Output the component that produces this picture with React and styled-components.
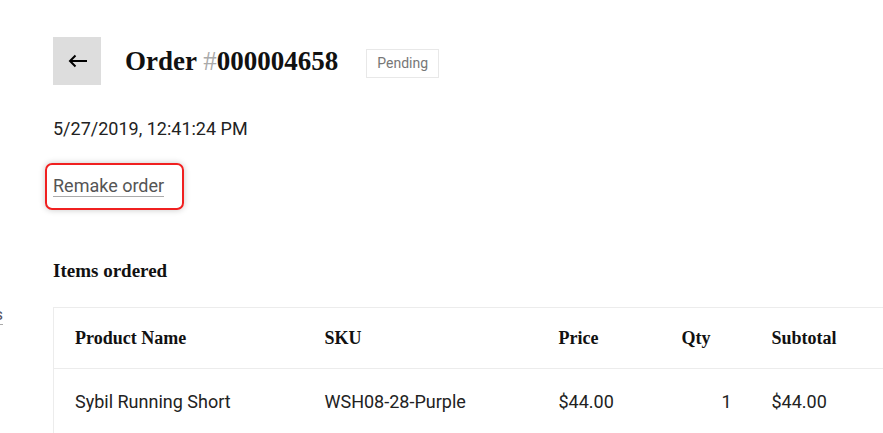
import styled, { createGlobalStyle } from "styled-components";

const GlobalStyle = createGlobalStyle`
  html, body {
    margin: 0;
    padding: 0;
    background: #fff;
    overflow: hidden;
  }
  body {
    font-family: Roboto, "Liberation Sans", sans-serif;
    color: #222;
  }
`;

const items = [
  { name: "Sybil Running Short", sku: "WSH08-28-Purple", price: "$44.00", qty: 1, subtotal: "$44.00" },
];

const BackArrow = () => (
  <svg width="20" height="14" viewBox="0 0 20 14" fill="none">
    <path d="M19 7H2M7.5 1.5L2 7l5.5 5.5" stroke="#000" strokeWidth="2" />
  </svg>
);

const App = () => {
  return (
    <>
      <GlobalStyle />
      <StyledLayout>
        <StyledSidebar>
          <SideLink href="#">My Orders</SideLink>
        </StyledSidebar>
        <StyledMain>
          <StyledHeader>
            <BackButton aria-label="Back">
              <BackArrow />
            </BackButton>
            <Title>
              Order <span>#</span>000004658
            </Title>
            <StatusBadge>Pending</StatusBadge>
          </StyledHeader>
          <OrderDate>5/27/2019, 12:41:24 PM</OrderDate>
          <Highlight>
            <RemakeLink href="#">Remake order</RemakeLink>
          </Highlight>
          <SectionTitle>Items ordered</SectionTitle>
          <ItemsTable>
            <colgroup>
              <col style={{ width: 250 }} />
              <col style={{ width: 234 }} />
              <col style={{ width: 123 }} />
              <col style={{ width: 90 }} />
              <col />
            </colgroup>
            <thead>
              <tr>
                <HeadCell>Product Name</HeadCell>
                <HeadCell>SKU</HeadCell>
                <HeadCell>Price</HeadCell>
                <HeadCell>Qty</HeadCell>
                <HeadCell>Subtotal</HeadCell>
              </tr>
            </thead>
            <tbody>
              {items.map((item) => (
                <tr key={item.sku}>
                  <Cell>{item.name}</Cell>
                  <Cell>{item.sku}</Cell>
                  <Cell>{item.price}</Cell>
                  <Cell $right>{item.qty}</Cell>
                  <Cell>{item.subtotal}</Cell>
                </tr>
              ))}
            </tbody>
          </ItemsTable>
        </StyledMain>
      </StyledLayout>
    </>
  );
};

export default App;

const StyledLayout = styled.div`
  display: flex;
  gap: 50px;
  width: 1000px;
`;

const StyledSidebar = styled.aside`
  width: 3px;
  flex-shrink: 0;
  overflow: hidden;
  display: flex;
  justify-content: flex-end;
  align-items: flex-start;
  padding-top: 304px;
`;

const SideLink = styled.a`
  white-space: nowrap;
  font-size: 17px;
  line-height: 20px;
  color: #556;
  text-decoration: none;
  border-bottom: 1px solid #aaa;
`;

const StyledMain = styled.main`
  padding-top: 37px;
  width: 870px;
`;

const StyledHeader = styled.div`
  display: flex;
  align-items: center;
  height: 48px;
`;

const BackButton = styled.button`
  width: 48px;
  height: 48px;
  border: none;
  background-color: #ddd;
  display: flex;
  align-items: center;
  justify-content: center;
  padding: 0 0 0 2px;
  margin-right: 24px;
`;

const Title = styled.h1`
  margin: 0 28px 0 0;
  font-family: "Liberation Serif", "DejaVu Serif", serif;
  font-size: 27px;
  font-weight: bold;
  color: #111;
  span {
    color: #aaa;
    font-weight: normal;
  }
`;

const StatusBadge = styled.span`
  display: inline-block;
  margin-top: 4px;
  border: 1px solid #e8e8e8;
  padding: 5px 10px;
  font-size: 14px;
  line-height: 17px;
  color: #777;
`;

const OrderDate = styled.div`
  margin-top: 34px;
  font-size: 18px;
  line-height: 20px;
  color: #222;
`;

const Highlight = styled.div`
  display: inline-block;
  margin: 24px 0 0 -8px;
  padding: 11px 18px 11px 6px;
  border: 2px solid #f02020;
  border-radius: 7px;
  box-shadow: 0 0 6px rgba(0, 0, 0, 0.22);
`;

const RemakeLink = styled.a`
  display: inline-block;
  font-size: 18px;
  line-height: 20px;
  color: #555;
  text-decoration: none;
  border-bottom: 1px solid #aaa;
`;

const SectionTitle = styled.h2`
  margin: 49px 0 24px;
  font-family: "Liberation Serif", "DejaVu Serif", serif;
  font-size: 19px;
  line-height: 24px;
  font-weight: bold;
  color: #111;
`;

const ItemsTable = styled.table`
  width: 870px;
  table-layout: fixed;
  border-collapse: collapse;
  border-top: 1px solid #ececec;
  border-left: 1px solid #ececec;
`;

const HeadCell = styled.th`
  height: 60px;
  padding: 0 20px 0 21px;
  text-align: left;
  font-family: "Liberation Serif", "DejaVu Serif", serif;
  font-size: 18px;
  font-weight: bold;
  color: #111;
  border-bottom: 1px solid #ececec;
`;

const Cell = styled.td`
  height: 64px;
  padding: 0 19px 0 21px;
  text-align: ${(props) => (props.$right ? "right" : "left")};
  font-size: 18px;
  color: #222;
`;
